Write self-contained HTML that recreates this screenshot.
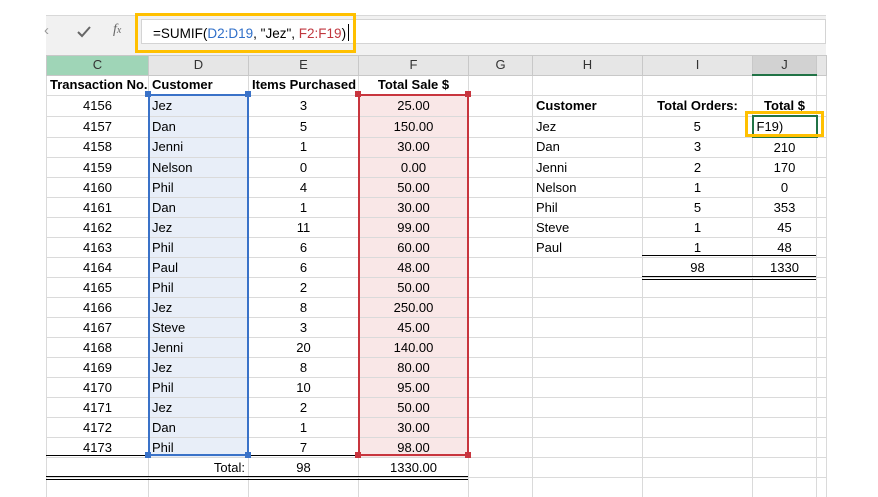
<!DOCTYPE html>
<html><head><meta charset="utf-8"><style>
body{margin:0;width:878px;height:494px;background:#fff;position:relative;overflow:hidden;font-family:"Liberation Sans",sans-serif;font-size:13px;color:#000}
.fb{position:absolute;left:46px;top:15px;width:780px;height:40px;background:#f1f1f1;border-top:1px solid #d8d8d8}
.inp{position:absolute;left:141px;top:19px;width:685px;height:25px;background:#fff;border:1px solid #d4d4d4;box-sizing:border-box}
.ftxt{position:absolute;left:153px;top:24px;font-size:13.5px}
.yb{position:absolute;border:3px solid #ffc000;box-sizing:border-box}
table{position:absolute;left:46px;top:55px;border-collapse:collapse;table-layout:fixed;width:780px}
td{border:1px solid #dadada;height:19px;padding:0 3px;white-space:nowrap;overflow:hidden;font-size:13px;line-height:18px}
tr.h td{background:#e6e6e6;text-align:center;color:#333;border-color:#c8c8c8;height:18px;line-height:18px}
.c{text-align:center}.r{text-align:right}.b{font-weight:bold}
.d{background:#e8eef8}.f{background:#f9e7e7}
.ln{position:absolute;background:#000;height:1px}
.sq{position:absolute;width:6px;height:6px}
</style></head><body>
<div class="fb"></div>
<div class="inp"></div>
<div style="position:absolute;left:44px;top:22px;color:#999;font-size:15px">‹</div>
<svg style="position:absolute;left:76px;top:25px" width="16" height="14"><path d="M2 7 L6 11 L14 2" stroke="#666" stroke-width="2" fill="none"/></svg>
<div style="position:absolute;left:113px;top:22px;color:#666;font-family:'Liberation Serif',serif;font-style:italic;font-size:14px">f<span style="font-size:10px">x</span></div>
<div class="ftxt">=SUMIF(<span style="color:#2f6fc9">D2:D19</span>, "Jez", <span style="color:#c0373f">F2:F19</span>)<span style="display:inline-block;width:1px;height:17px;background:#000;vertical-align:-3px;margin-left:2px"></span></div>
<div class="yb" style="left:135px;top:13px;width:221px;height:40px"></div>
<table>
<colgroup><col style="width:102px"><col style="width:100px"><col style="width:110px"><col style="width:110px"><col style="width:64px"><col style="width:110px"><col style="width:110px"><col style="width:64px"><col style="width:10px"></colgroup>
<tr class="h"><td style="background:#9fd5b7">C</td><td>D</td><td>E</td><td>F</td><td>G</td><td>H</td><td>I</td><td style="background:#d2d2d2;border-bottom:2px solid #217346">J</td><td></td></tr>
<tr><td class="b c">Transaction No.</td><td class="b">Customer</td><td class="b c">Items Purchased</td><td class="b c">Total Sale $</td><td></td><td></td><td></td><td></td><td></td></tr>
<tr><td class="c">4156</td><td class="d">Jez</td><td class="c">3</td><td class="c f">25.00</td><td></td><td class="b">Customer</td><td class="b c">Total Orders:</td><td class="b c">Total $</td><td></td></tr>
<tr><td class="c">4157</td><td class="d">Dan</td><td class="c">5</td><td class="c f">150.00</td><td></td><td>Jez</td><td class="c">5</td><td style="border:2px solid #217346">F19)</td><td></td></tr>
<tr><td class="c">4158</td><td class="d">Jenni</td><td class="c">1</td><td class="c f">30.00</td><td></td><td>Dan</td><td class="c">3</td><td class="c">210</td><td></td></tr>
<tr><td class="c">4159</td><td class="d">Nelson</td><td class="c">0</td><td class="c f">0.00</td><td></td><td>Jenni</td><td class="c">2</td><td class="c">170</td><td></td></tr>
<tr><td class="c">4160</td><td class="d">Phil</td><td class="c">4</td><td class="c f">50.00</td><td></td><td>Nelson</td><td class="c">1</td><td class="c">0</td><td></td></tr>
<tr><td class="c">4161</td><td class="d">Dan</td><td class="c">1</td><td class="c f">30.00</td><td></td><td>Phil</td><td class="c">5</td><td class="c">353</td><td></td></tr>
<tr><td class="c">4162</td><td class="d">Jez</td><td class="c">11</td><td class="c f">99.00</td><td></td><td>Steve</td><td class="c">1</td><td class="c">45</td><td></td></tr>
<tr><td class="c">4163</td><td class="d">Phil</td><td class="c">6</td><td class="c f">60.00</td><td></td><td>Paul</td><td class="c">1</td><td class="c">48</td><td></td></tr>
<tr><td class="c">4164</td><td class="d">Paul</td><td class="c">6</td><td class="c f">48.00</td><td></td><td></td><td class="c">98</td><td class="c">1330</td><td></td></tr>
<tr><td class="c">4165</td><td class="d">Phil</td><td class="c">2</td><td class="c f">50.00</td><td></td><td></td><td></td><td></td><td></td></tr>
<tr><td class="c">4166</td><td class="d">Jez</td><td class="c">8</td><td class="c f">250.00</td><td></td><td></td><td></td><td></td><td></td></tr>
<tr><td class="c">4167</td><td class="d">Steve</td><td class="c">3</td><td class="c f">45.00</td><td></td><td></td><td></td><td></td><td></td></tr>
<tr><td class="c">4168</td><td class="d">Jenni</td><td class="c">20</td><td class="c f">140.00</td><td></td><td></td><td></td><td></td><td></td></tr>
<tr><td class="c">4169</td><td class="d">Jez</td><td class="c">8</td><td class="c f">80.00</td><td></td><td></td><td></td><td></td><td></td></tr>
<tr><td class="c">4170</td><td class="d">Phil</td><td class="c">10</td><td class="c f">95.00</td><td></td><td></td><td></td><td></td><td></td></tr>
<tr><td class="c">4171</td><td class="d">Jez</td><td class="c">2</td><td class="c f">50.00</td><td></td><td></td><td></td><td></td><td></td></tr>
<tr><td class="c">4172</td><td class="d">Dan</td><td class="c">1</td><td class="c f">30.00</td><td></td><td></td><td></td><td></td><td></td></tr>
<tr><td class="c">4173</td><td class="d">Phil</td><td class="c">7</td><td class="c f">98.00</td><td></td><td></td><td></td><td></td><td></td></tr>
<tr><td></td><td class="r">Total:</td><td class="c">98</td><td class="c">1330.00</td><td></td><td></td><td></td><td></td><td></td></tr>
<tr><td style="border-bottom:none"></td><td style="border-bottom:none"></td><td style="border-bottom:none"></td><td style="border-bottom:none"></td><td style="border-bottom:none"></td><td style="border-bottom:none"></td><td style="border-bottom:none"></td><td style="border-bottom:none"></td><td style="border-bottom:none"></td></tr>
</table>
<div class="ln" style="left:46px;top:455px;width:422px"></div>
<div class="ln" style="left:46px;top:476px;width:422px"></div>
<div class="ln" style="left:46px;top:479px;width:422px"></div>
<div class="ln" style="left:642px;top:255px;width:174px"></div>
<div class="ln" style="left:642px;top:276px;width:174px"></div>
<div class="ln" style="left:642px;top:279px;width:174px"></div>
<div style="position:absolute;left:148px;top:94px;width:101px;height:362px;border:2px solid #3a72c8;box-sizing:border-box"></div>
<div style="position:absolute;left:358px;top:94px;width:111px;height:362px;border:2px solid #c8353e;box-sizing:border-box"></div>
<div class="sq" style="left:145px;top:91px;background:#3a72c8"></div><div class="sq" style="left:245px;top:91px;background:#3a72c8"></div>
<div class="sq" style="left:145px;top:452px;background:#3a72c8"></div><div class="sq" style="left:245px;top:452px;background:#3a72c8"></div>
<div class="sq" style="left:355px;top:91px;background:#c8353e"></div><div class="sq" style="left:465px;top:91px;background:#c8353e"></div>
<div class="sq" style="left:355px;top:452px;background:#c8353e"></div><div class="sq" style="left:465px;top:452px;background:#c8353e"></div>
<div class="yb" style="left:745px;top:111px;width:79px;height:26px"></div>
</body></html>
